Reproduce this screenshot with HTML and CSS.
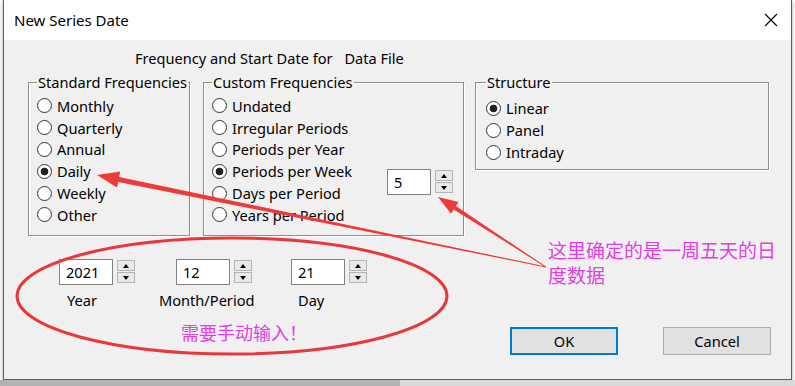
FILE: index.html
```html
<!DOCTYPE html>
<html lang="en">
<head>
  <meta charset="UTF-8" />
  <title>New Series Date</title>
  <link rel="stylesheet" href="styles.css">
</head>
<body>
  <div class="dialog">
    <div class="titlebar">
      <span class="title">New Series Date</span>
      <svg class="close" viewBox="0 0 14 14"><path d="M1 1L13 13M13 1L1 13"/></svg>
    </div>

    <div class="content">
      <p class="caption">Frequency and Start Date for <span class="caption-file">Data File</span></p>

      <div class="groups">
        <fieldset class="group group-std">
          <legend>Standard Frequencies</legend>
          <ul class="radios">
            <li><span class="radio"></span>Monthly</li>
            <li><span class="radio"></span>Quarterly</li>
            <li><span class="radio"></span>Annual</li>
            <li><span class="radio on"></span>Daily</li>
            <li><span class="radio"></span>Weekly</li>
            <li><span class="radio"></span>Other</li>
          </ul>
        </fieldset>

        <fieldset class="group group-custom">
          <legend>Custom Frequencies</legend>
          <ul class="radios">
            <li><span class="radio"></span>Undated</li>
            <li><span class="radio"></span>Irregular Periods</li>
            <li><span class="radio"></span>Periods per Year</li>
            <li><span class="radio on"></span>Periods per Week</li>
            <li><span class="radio"></span>Days per Period</li>
            <li><span class="radio"></span>Years per Period</li>
          </ul>
          <div class="spin spin-period">
            <span class="edit edit-sm">5</span>
            <span class="arrows"><span class="up"></span><span class="down"></span></span>
          </div>
        </fieldset>

        <fieldset class="group group-struct">
          <legend>Structure</legend>
          <ul class="radios">
            <li><span class="radio on"></span>Linear</li>
            <li><span class="radio"></span>Panel</li>
            <li><span class="radio"></span>Intraday</li>
          </ul>
        </fieldset>
      </div>

      <div class="dates">
        <div class="field field-year">
          <div class="spin">
            <span class="edit">2021</span>
            <span class="arrows"><span class="up"></span><span class="down"></span></span>
          </div>
          <span class="field-label">Year</span>
        </div>
        <div class="field field-month">
          <div class="spin">
            <span class="edit">12</span>
            <span class="arrows"><span class="up"></span><span class="down"></span></span>
          </div>
          <span class="field-label">Month/Period</span>
        </div>
        <div class="field field-day">
          <div class="spin">
            <span class="edit">21</span>
            <span class="arrows"><span class="up"></span><span class="down"></span></span>
          </div>
          <span class="field-label">Day</span>
        </div>
      </div>

      <div class="actions">
        <button class="btn btn-default">OK</button>
        <button class="btn">Cancel</button>
      </div>
    </div>
  </div>
  <div class="under"></div>

  <!-- red annotations drawn over the dialog -->
  <svg class="marks" width="795" height="386" viewBox="0 0 795 386">
    <ellipse cx="232" cy="296" rx="215" ry="58" fill="none" stroke="#e8383b" stroke-width="3"/>
    <polygon points="546,266.6 119.1,177 120.2,171.4 97,175 117,187.4 118.1,181.9 546,267.4" fill="#ef3a3a"/>
    <polygon points="546,266.6 455.9,206.1 458.6,201.9 438,197 451,213.7 453.7,209.5 546,267.4" fill="#ef3a3a"/>
  </svg>
  <div class="note note-date">需要手动输入！</div>
  <div class="note note-week">这里确定的是一周五天的日<br>度数据</div>
</body>
</html>
```

FILE: styles.css
```css
* {
  box-sizing: border-box;
}
body {
  margin: 0;
  width: 795px;
  height: 386px;
  position: relative;
  overflow: hidden;
  background: #fff;
  color: #000;
  font-family: "Noto Sans", sans-serif;
  font-size: 14.6px;
}
.dialog {
  margin-left: 3px;
  width: 789px;
  height: 380px;
  background: #f0f0f0;
  border: 1px solid #5c5c5c;
  border-top: 0;
  box-shadow: 0 1px 4px rgba(0,0,0,0.35);
}
.titlebar {
  height: 40px;
  background: #fff;
  display: flex;
  align-items: center;
  justify-content: space-between;
  padding: 0 13px 0 10px;
}
.title {
  font-size: 15px;
}
.close {
  width: 14px;
  height: 14px;
  fill: none;
  stroke: #000;
  stroke-width: 1.1;
}
.content {
  padding-top: 9px;
}
.caption {
  margin: 0 0 0 131px;
  line-height: 18px;
}
.caption-file {
  margin-left: 8px;
}
.groups {
  display: flex;
  align-items: flex-start;
  margin: 6px 0 0 24px;
}
.group {
  margin: 0;
  min-width: 0;
  padding: 4px 10px 0 8px;
  border: 1px solid #8c8c8c;
  box-shadow: inset 1px 1px 0 #fff, 1px 1px 0 #fff;
}
.group legend {
  padding: 0 1px;
  line-height: 18px;
  white-space: nowrap;
}
.group-std {
  width: 162px;
  height: 163px;
}
.group-custom {
  width: 261px;
  height: 163px;
  margin-left: 13px;
  display: flex;
  align-items: flex-start;
}
.group-struct {
  width: 294px;
  height: 97px;
  margin-left: 11px;
  padding: 6px 10px 0 10px;
}
.radios {
  list-style: none;
  margin: 0;
  padding: 0;
}
.radios li {
  display: flex;
  align-items: center;
  gap: 5px;
  height: 21.8px;
  white-space: nowrap;
}
.group-struct .radios li {
  height: 22px;
}
.radio {
  flex: none;
  width: 15px;
  height: 15px;
  border: 1px solid #333;
  border-radius: 50%;
  background: #fff;
}
.radio.on {
  background: radial-gradient(circle, #222 0 3.5px, #fff 4.2px);
}
.spin {
  display: flex;
  gap: 4px;
}
.spin-period {
  margin: 74px 0 0 auto;
}
.edit {
  width: 54px;
  height: 26px;
  background: #fff;
  border: 1px solid #828282;
  padding-left: 6px;
  line-height: 24px;
}
.edit-sm {
  width: 44px;
}
.arrows {
  display: flex;
  flex-direction: column;
  gap: 1px;
  margin-top: 1px;
}
.up, .down {
  width: 18px;
  height: 11px;
  background: #e9e9e9;
  border: 1px solid #b4b4b4;
  display: flex;
  align-items: center;
  justify-content: center;
}
.up::before {
  content: "";
  border: 3.5px solid transparent;
  border-top: 0;
  border-bottom: 4px solid #000;
}
.down::before {
  content: "";
  border: 3.5px solid transparent;
  border-bottom: 0;
  border-top: 4px solid #000;
}
.dates {
  display: flex;
  margin: 23px 0 0 55px;
}
.field {
  width: 76px;
  display: flex;
  flex-direction: column;
}
.field-label {
  margin-top: 6px;
  line-height: 18px;
  white-space: nowrap;
}
.field-year .field-label { margin-left: 8px; }
.field-month { margin-left: 41px; }
.field-month .field-label { margin-left: -17px; }
.field-day { margin-left: 39px; }
.field-day .field-label { margin-left: 7px; }
.actions {
  display: flex;
  justify-content: flex-end;
  gap: 45px;
  margin-top: 18px;
  padding-right: 20px;
}
.btn {
  width: 108px;
  height: 28px;
  padding: 0;
  background: #e1e1e1;
  border: 1px solid #adadad;
  font: inherit;
  color: #000;
}
.btn-default {
  border: 2px solid #0078d7;
}
.under {
  height: 6px;
  background: linear-gradient(to right, #b3b3b3 400px, #d9d9d9 400px);
}
.marks {
  position: absolute;
  left: 0;
  top: 0;
  pointer-events: none;
}
.note {
  position: absolute;
  color: #df3fe3;
  font-family: "Noto Sans CJK SC", sans-serif;
  white-space: nowrap;
}
.note-date {
  left: 181px;
  top: 321px;
  font-size: 18px;
  line-height: 22px;
}
.note-week {
  left: 548px;
  top: 237px;
  font-size: 19px;
  line-height: 25px;
}
```
